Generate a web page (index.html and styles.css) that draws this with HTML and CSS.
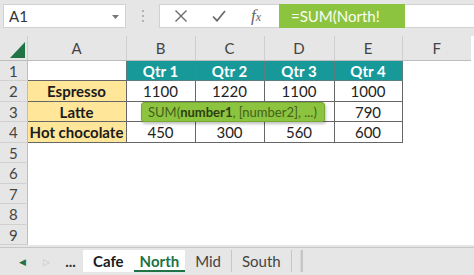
FILE: index.html
```html
<!DOCTYPE html>
<html lang="en">
<head>
  <meta charset="UTF-8" />
  <title>Cafe sales | North</title>
  <link rel="stylesheet" href="styles.css">
</head>
<body>
  <div class="app">
    <!-- Formula bar -->
    <div class="fbar">
      <div class="namebox">
        <span>A1</span>
        <svg class="drop" width="7" height="4" viewBox="0 0 7 4"><path d="M0 0h7L3.5 4z" fill="#777"/></svg>
      </div>
      <div class="grip"><i></i><i></i><i></i></div>
      <div class="fx-area">
        <svg class="ico" width="14" height="14" viewBox="0 0 14 14"><path d="M1.5 1.5l11 11M12.5 1.5l-11 11" stroke="#6b6b6b" stroke-width="1.4" fill="none"/></svg>
        <svg class="ico" width="14" height="12" viewBox="0 0 14 12"><path d="M1 6.5l4 4.2L13 1" stroke="#6b6b6b" stroke-width="1.8" fill="none"/></svg>
        <span class="fx">f<small>x</small></span>
        <div class="formula">=SUM(North!</div>
      </div>
    </div>

    <!-- Sheet -->
    <div class="sheet">
      <table class="grid">
        <colgroup>
          <col class="c-rh"><col class="c-a"><col class="c-n"><col class="c-n"><col class="c-d"><col class="c-e"><col class="c-n">
        </colgroup>
        <tr class="hdr">
          <th class="corner"><svg width="15" height="16" viewBox="0 0 15 16"><path d="M15 0V16H0z" fill="#217346"/></svg></th>
          <th>A</th><th>B</th><th>C</th><th>D</th><th>E</th><th>F</th>
        </tr>
        <tr class="r20">
          <th class="rh">1</th><td></td>
          <td class="q">Qtr 1</td><td class="q">Qtr 2</td><td class="q">Qtr 3</td><td class="q">Qtr 4</td><td></td>
        </tr>
        <tr class="r21">
          <th class="rh">2</th><td class="lbl">Espresso</td>
          <td class="v">1100</td><td class="v">1220</td><td class="v">1100</td><td class="v">1000</td><td></td>
        </tr>
        <tr class="r20">
          <th class="rh">3</th><td class="lbl">Latte</td>
          <td class="v"></td><td class="v"></td><td class="v"></td><td class="v">790</td><td></td>
        </tr>
        <tr class="r21">
          <th class="rh">4</th><td class="lbl">Hot chocolate</td>
          <td class="v">450</td><td class="v">300</td><td class="v">560</td><td class="v">600</td><td></td>
        </tr>
        <tr class="r20"><th class="rh">5</th><td></td><td></td><td></td><td></td><td></td><td></td></tr>
        <tr class="r21"><th class="rh">6</th><td></td><td></td><td></td><td></td><td></td><td></td></tr>
        <tr class="r20"><th class="rh">7</th><td></td><td></td><td></td><td></td><td></td><td></td></tr>
        <tr class="r21"><th class="rh">8</th><td></td><td></td><td></td><td></td><td></td><td></td></tr>
        <tr class="r20"><th class="rh">9</th><td></td><td></td><td></td><td></td><td></td><td></td></tr>
      </table>

      <!-- function tooltip -->
      <div class="tip">SUM(<b>number1</b>, [number2], ...)</div>
    </div>

    <!-- Sheet tabs -->
    <div class="tabs">
      <span class="nav on">&#9664;</span>
      <span class="nav">&#9655;</span>
      <span class="more">...</span>
      <div class="tab sel">Cafe</div>
      <div class="tab sel active">North</div>
      <div class="tab">Mid</div>
      <div class="tab">South</div>
      <div class="split"></div>
    </div>
  </div>
</body>
</html>
```

FILE: styles.css
```css
/* ---------- Base ---------- */
*, *::before, *::after { box-sizing: border-box; margin: 0; padding: 0; }
body {
  font-family: Lato, "Liberation Sans", sans-serif;
  background: #e6e6e6;
  width: 474px; height: 275px; overflow: hidden;
  color: #222;
}
.app { display: flex; flex-direction: column; height: 275px; }

/* ---------- Formula bar ---------- */
.fbar { display: flex; align-items: flex-start; height: 37px; padding: 4px 0 0 3px; }
.namebox {
  width: 123px; height: 24px; background: #fff; border: 1px solid #d2d2d2;
  display: flex; align-items: center; justify-content: space-between;
  padding: 0 6px 0 5px; font-size: 15px; color: #333;
}
.namebox .drop { margin-top: 1px; }
.grip { width: 33px; height: 24px; display: flex; flex-direction: column; align-items: center; justify-content: center; gap: 3px; }
.grip i { width: 2px; height: 2px; background: #b4b4b4; }
.fx-area {
  flex: 1; height: 24px; background: #fff; border: 1px solid #d2d2d2; border-right: none;
  display: flex; align-items: center; padding-left: 14px;
}
.fx-area .ico { margin-right: 24px; }
.fx {
  font-family: "Liberation Serif", serif; font-style: italic; font-size: 17px; color: #666;
  width: 28px; margin-left: 1px;
}
.fx small { font-size: 12px; }
.formula {
  width: 126px; height: 24px; margin-top: -1px; background: #8dc43f; color: #fbfdf4;
  font-size: 15px; line-height: 24px; padding-left: 12px;
}

/* ---------- Grid ---------- */
.sheet { position: relative; background: #fff; }
.grid { border-collapse: collapse; table-layout: fixed; width: 471px; }
.c-rh { width: 27px; }
.c-a { width: 99px; }
.c-n { width: 69px; }
.c-d { width: 70px; }
.c-e { width: 68px; }
.grid td, .grid th { padding: 0; font-size: 15px; text-align: center; white-space: nowrap; overflow: hidden; }
.hdr { height: 25px; }
.hdr th {
  background: #e6e6e6; font-weight: normal; color: #444; border-left: 1px solid #cfcfcf;
  border-bottom: 1px solid #bdbdbd; vertical-align: middle;
}
.hdr th.corner { border-left: none; text-align: right; vertical-align: bottom; padding: 0 2px 2px 0; }
.corner svg { display: block; margin-left: auto; }
.r20 { height: 20px; }
.r21 { height: 21px; }
.rh {
  background: #e6e6e6; font-weight: normal; color: #444;
  border-bottom: 1px solid #d0d0d0; border-right: 1px solid #bdbdbd;
}
.q { background: #17999a; color: #fff; font-weight: bold; border: 1px solid #5b7f80; }
.v { border: 1px solid #666; color: #222; }
.lbl { background: #ffe699; font-weight: bold; border: 1px solid #666; color: #1b1b1b; }

/* ---------- Tooltip ---------- */
.tip {
  position: absolute; left: 141px; top: 66px; width: 184px; height: 20px;
  background: #8dc43f; border: 1px solid #78a834; border-radius: 3px;
  box-shadow: 1px 2px 3px rgba(0,0,0,.25); white-space: nowrap;
  font-size: 13px; line-height: 18px; color: #44601c; padding-left: 6px;
}
.tip b { color: #2c3f10; }

/* ---------- Sheet tabs ---------- */
.tabs {
  flex: 1; display: flex; align-items: stretch; border-top: 1px solid #c6c6c6;
  margin-top: 2px; padding: 2px 0 3px 0; background: #e6e6e6;
}
.nav { width: 24px; font-size: 9px; color: #c2c2c2; display: flex; align-items: center; justify-content: center; }
.nav:first-child { margin-left: 10px; }
.nav.on { color: #217346; }
.more { width: 25px; font-weight: bold; font-size: 15px; color: #333; display: flex; align-items: center; justify-content: center; }
.tab {
  padding: 0 10px; font-size: 15px; color: #444; display: flex; align-items: center;
  border-right: 1px solid #c6c6c6;
}
.tab.sel { background: #fff; font-weight: bold; color: #1b1b1b; border-right: none; }
.tab.active { color: #217346; border-bottom: 2px solid #217346; padding: 2px 6px 0 6px; }
.split { width: 3px; margin-left: 8px; background: #c6c6c6; border-left: 1px solid #d8d8d8; }
```
